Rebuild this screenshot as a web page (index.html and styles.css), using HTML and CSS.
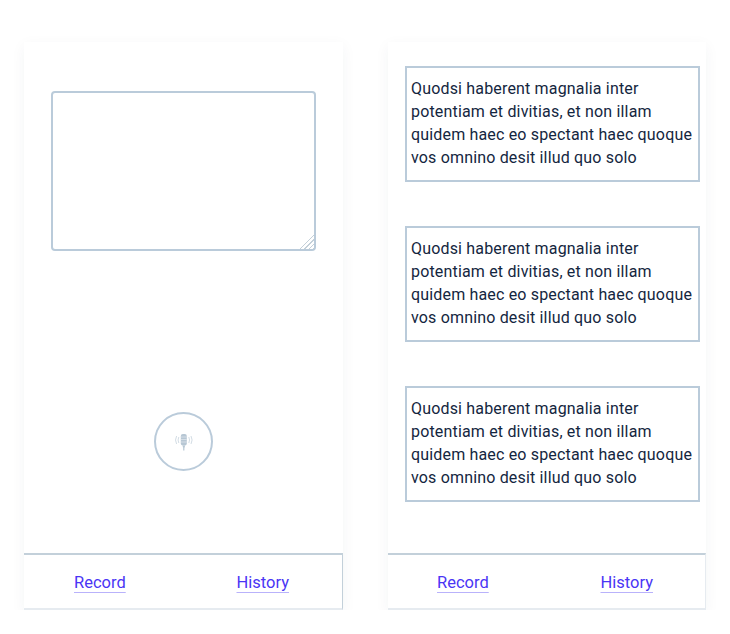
FILE: index.html
```html
<!DOCTYPE html>
<html>
<head>
<link rel="stylesheet" href="styles.css">
</head>
<body>

<div class="screens">
  <div class="screen">
    <div class="record-view">
      <textarea class="note"></textarea>
      <div class="mic-btn">
        <svg class="mic-icon" viewBox="0 0 20 20" width="20" height="20">
          <rect x="6.800" y="2" width="6" height="11.500" rx="2" fill="#b7c7d4"/>
          <path d="M6.800 5h6M6.800 7.500h6M6.800 10h6" stroke="#e4eaef" stroke-width="0.7"/>
          <path d="M8.500 13.500h2.600l-0.500 2h-1.600z" fill="#b7c7d4"/>
          <path d="M9.800 15v3.500" stroke="#b7c7d4" stroke-width="1.200"/>
          <path d="M4.800 5q-1.500 3 0 6M14.800 5q1.500 3 0 6M2.600 4q-2.200 4 0 8M17 4q2.200 4 0 8" fill="none" stroke="#c6d3dd" stroke-width="0.800"/>
        </svg>
      </div>
    </div>
    <div class="tabs tabs-edge">
      <a href="#">Record</a>
      <a href="#">History</a>
    </div>
  </div>

  <div class="screen screen-right">
    <div class="history-view">
      <p class="entry">Quodsi haberent magnalia inter potentiam et divitias, et non illam quidem haec eo spectant haec quoque vos omnino desit illud quo solo</p>
      <p class="entry">Quodsi haberent magnalia inter potentiam et divitias, et non illam quidem haec eo spectant haec quoque vos omnino desit illud quo solo</p>
      <p class="entry">Quodsi haberent magnalia inter potentiam et divitias, et non illam quidem haec eo spectant haec quoque vos omnino desit illud quo solo</p>
    </div>
    <div class="tabs">
      <a href="#">Record</a>
      <a href="#">History</a>
    </div>
  </div>
</div>

</body>
</html>
```

FILE: styles.css
```css
body {
  margin: 0;
  background-color: #fff;
  font-family: "Roboto", "Liberation Sans", sans-serif;
  color: #142640;
}

.screens {
  display: flex;
  gap: 45px;
  padding: 42px 0 0 24px;
}

.screen {
  width: 319px;
  height: 568px;
  display: flex;
  flex-direction: column;
  box-shadow: 0 4px 14px rgba(40, 60, 80, 0.05);
}

.screen-right {
  width: 318px;
}

.record-view {
  flex: 1;
  display: flex;
  flex-direction: column;
  align-items: center;
}

.note {
  display: block;
  box-sizing: border-box;
  width: 265px;
  height: 160px;
  margin-top: 49px;
  border: 2px solid #bacbda;
  border-radius: 4px;
  background-color: #fff;
  outline: none;
}

.note::-webkit-resizer {
  background:
    linear-gradient(135deg, #fff 50%, transparent 50%),
    repeating-linear-gradient(135deg, #fff 0, #fff 2px, #c4d0d9 2px, #c4d0d9 3px);
}

.mic-btn {
  box-sizing: border-box;
  width: 59px;
  height: 59px;
  margin-top: 161px;
  border: 2px solid #bacbda;
  border-radius: 50%;
  display: flex;
  align-items: center;
  justify-content: center;
}

.history-view {
  flex: 1;
  padding-top: 24px;
}

.entry {
  box-sizing: border-box;
  width: 295px;
  height: 116px;
  margin: 0 0 44px 17px;
  padding: 9px 0 9px 4px;
  border: 2px solid #bacbda;
  font-size: 16px;
  line-height: 23px;
  letter-spacing: 0.17px;
}

.tabs {
  height: 57px;
  box-sizing: border-box;
  padding: 2px 53px 0 50px;
  border-top: 2px solid #c3d0da;
  border-right: 1px solid #e6ebf0;
  border-bottom: 2px solid #e6ebf0;
  display: flex;
  justify-content: space-between;
  align-items: center;
}

.screen-right .tabs {
  padding: 2px 52px 0 49px;
}

.tabs-edge {
  border-right-color: #c3d0da;
}

.tabs a {
  font-size: 16.5px;
  color: #4a35f5;
  text-decoration: underline;
  text-decoration-color: #b9b2fb;
  text-underline-offset: 4px;
}
```
